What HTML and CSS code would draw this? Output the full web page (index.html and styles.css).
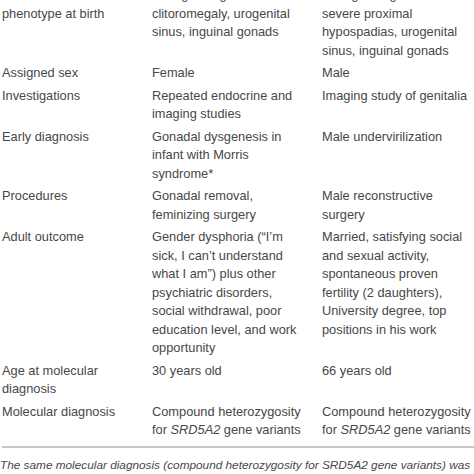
FILE: index.html
```html
<!DOCTYPE html>
<html lang="en">
<head>
<meta charset="utf-8">
<title>Case comparison</title>
<link rel="stylesheet" href="styles.css">
</head>
<body>
<div class="page">
  <table class="cases">
    <colgroup>
      <col class="c-label">
      <col class="c-one">
      <col class="c-two">
    </colgroup>
    <tbody>
      <tr><td>Clinical<br>phenotype at birth</td><td>Ambiguous genitalia with clitoromegaly, urogenital sinus, inguinal gonads</td><td>Ambiguous genitalia with severe proximal hypospadias, urogenital sinus, inguinal gonads</td></tr>
      <tr><td>Assigned sex</td><td>Female</td><td>Male</td></tr>
      <tr><td>Investigations</td><td>Repeated endocrine and imaging studies</td><td>Imaging study of genitalia</td></tr>
      <tr><td>Early diagnosis</td><td>Gonadal dysgenesis in infant with Morris syndrome*</td><td>Male undervirilization</td></tr>
      <tr><td>Procedures</td><td>Gonadal removal, feminizing surgery</td><td>Male reconstructive surgery</td></tr>
      <tr><td>Adult outcome</td><td>Gender dysphoria (“I’m sick, I can’t understand what I am”) plus other psychiatric disorders, social withdrawal, poor education level, and work opportunity</td><td>Married, satisfying social and sexual activity, spontaneous proven fertility (2 daughters), University degree, top positions in his work</td></tr>
      <tr><td>Age at molecular diagnosis</td><td>30 years old</td><td>66 years old</td></tr>
      <tr><td>Molecular diagnosis</td><td>Compound heterozygosity for <i>SRD5A2</i> gene variants</td><td>Compound heterozygosity for <i>SRD5A2</i> gene variants</td></tr>
    </tbody>
  </table>
  <p class="note">The same molecular diagnosis (compound heterozygosity for SRD5A2 gene variants) was found in both patients.</p>
</div>
</body>
</html>
```

FILE: styles.css
```css
html, body {
  margin: 0;
  padding: 0;
  overflow: hidden;
  background: #ffffff;
}

.page {
  width: 474px;
  height: 474px;
  overflow: hidden;
  padding-left: 2px;
  box-sizing: border-box;
  font-family: "Liberation Sans", Arial, Helvetica, sans-serif;
  color: #474747;
}

.cases {
  margin-top: -16px;
  border-collapse: collapse;
  table-layout: fixed;
  width: 472px;
  font-size: 12.8px;
  line-height: 18.5px;
  border-bottom: 2px solid #c6c6c6;
}

.c-label { width: 150px; }
.c-one { width: 170px; }
.c-two { width: 152px; }

.cases td {
  padding: 2px 18px 2px 0;
  vertical-align: top;
}

.cases td:first-child {
  padding-right: 8px;
}

.cases td:last-child {
  padding-right: 0;
}

.cases tbody tr:last-child td {
  padding-bottom: 6px;
}

.note {
  margin: 8px 0 0 -2px;
  font-size: 11.8px;
  line-height: 18.5px;
  font-style: italic;
  white-space: nowrap;
}
```
